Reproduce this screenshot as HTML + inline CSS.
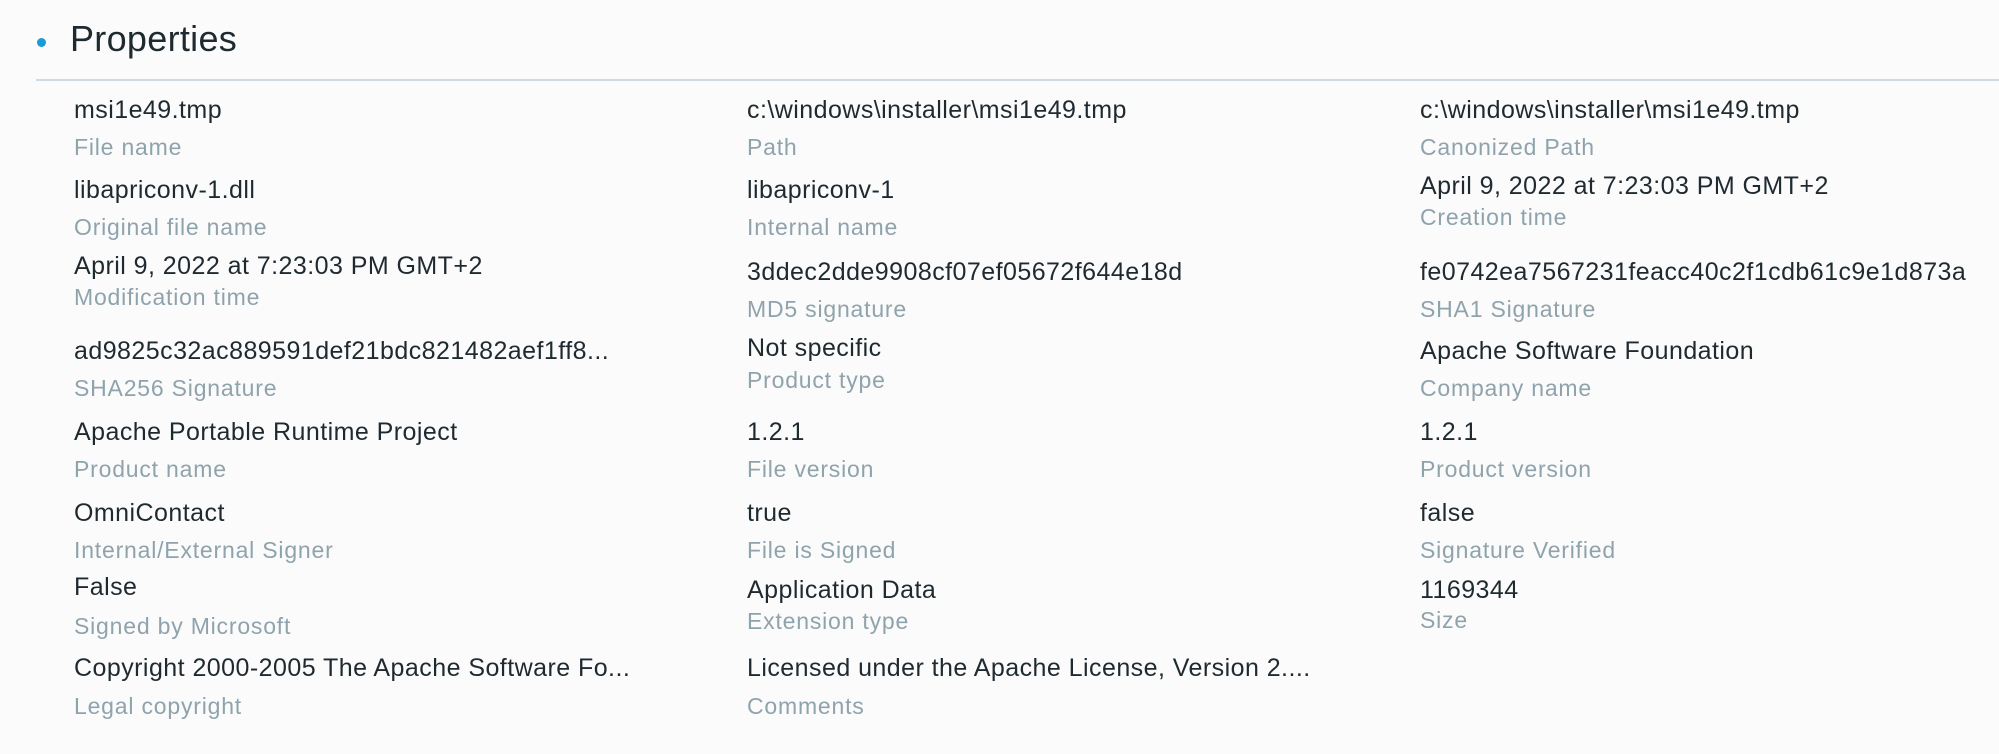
<!DOCTYPE html>
<html><head><meta charset="utf-8"><style>
html,body{margin:0;padding:0;}
body{width:1999px;height:754px;background:#fbfbfb;position:relative;overflow:hidden;font-family:"Liberation Sans",sans-serif;}
.t{position:absolute;height:30px;line-height:30px;white-space:nowrap;font-size:23px;letter-spacing:0.8px;}
.v{color:#1f2a30;font-size:25px;letter-spacing:0.45px;}
.l{color:#8fa3ad;}
.dot{position:absolute;left:37px;top:38px;width:9px;height:9px;border-radius:50%;background:#1a9ad6;}
.h{position:absolute;left:70px;top:19px;font-size:36px;line-height:40px;color:#1f2a30;letter-spacing:0.3px;}
.line{position:absolute;left:36px;right:0;top:79px;height:2px;background:#cfdbe2;}
</style></head><body>
<div class="dot"></div>
<div class="h">Properties</div>
<div class="line"></div>

<div class="t v" style="left:74px;top:95px">msi1e49.tmp</div>
<div class="t l" style="left:74px;top:132px">File name</div>
<div class="t v" style="left:74px;top:175px">libapriconv-1.dll</div>
<div class="t l" style="left:74px;top:212px">Original file name</div>
<div class="t v" style="left:74px;top:251px">April 9, 2022 at 7:23:03 PM GMT+2</div>
<div class="t l" style="left:74px;top:282px">Modification time</div>
<div class="t v" style="left:74px;top:336px">ad9825c32ac889591def21bdc821482aef1ff8...</div>
<div class="t l" style="left:74px;top:373px">SHA256 Signature</div>
<div class="t v" style="left:74px;top:417px">Apache Portable Runtime Project</div>
<div class="t l" style="left:74px;top:454px">Product name</div>
<div class="t v" style="left:74px;top:498px">OmniContact</div>
<div class="t l" style="left:74px;top:535px">Internal/External Signer</div>
<div class="t v" style="left:74px;top:572px">False</div>
<div class="t l" style="left:74px;top:611px">Signed by Microsoft</div>
<div class="t v" style="left:74px;top:653px">Copyright 2000-2005 The Apache Software Fo...</div>
<div class="t l" style="left:74px;top:691px">Legal copyright</div>

<div class="t v" style="left:747px;top:95px">c:\windows\installer\msi1e49.tmp</div>
<div class="t l" style="left:747px;top:132px">Path</div>
<div class="t v" style="left:747px;top:175px">libapriconv-1</div>
<div class="t l" style="left:747px;top:212px">Internal name</div>
<div class="t v" style="left:747px;top:257px">3ddec2dde9908cf07ef05672f644e18d</div>
<div class="t l" style="left:747px;top:294px">MD5 signature</div>
<div class="t v" style="left:747px;top:333px">Not specific</div>
<div class="t l" style="left:747px;top:365px">Product type</div>
<div class="t v" style="left:747px;top:417px">1.2.1</div>
<div class="t l" style="left:747px;top:454px">File version</div>
<div class="t v" style="left:747px;top:498px">true</div>
<div class="t l" style="left:747px;top:535px">File is Signed</div>
<div class="t v" style="left:747px;top:575px">Application Data</div>
<div class="t l" style="left:747px;top:606px">Extension type</div>
<div class="t v" style="left:747px;top:653px">Licensed under the Apache License, Version 2....</div>
<div class="t l" style="left:747px;top:691px">Comments</div>

<div class="t v" style="left:1420px;top:95px">c:\windows\installer\msi1e49.tmp</div>
<div class="t l" style="left:1420px;top:132px">Canonized Path</div>
<div class="t v" style="left:1420px;top:171px">April 9, 2022 at 7:23:03 PM GMT+2</div>
<div class="t l" style="left:1420px;top:202px">Creation time</div>
<div class="t v" style="left:1420px;top:257px">fe0742ea7567231feacc40c2f1cdb61c9e1d873a</div>
<div class="t l" style="left:1420px;top:294px">SHA1 Signature</div>
<div class="t v" style="left:1420px;top:336px">Apache Software Foundation</div>
<div class="t l" style="left:1420px;top:373px">Company name</div>
<div class="t v" style="left:1420px;top:417px">1.2.1</div>
<div class="t l" style="left:1420px;top:454px">Product version</div>
<div class="t v" style="left:1420px;top:498px">false</div>
<div class="t l" style="left:1420px;top:535px">Signature Verified</div>
<div class="t v" style="left:1420px;top:575px">1169344</div>
<div class="t l" style="left:1420px;top:605px">Size</div>
</body></html>
